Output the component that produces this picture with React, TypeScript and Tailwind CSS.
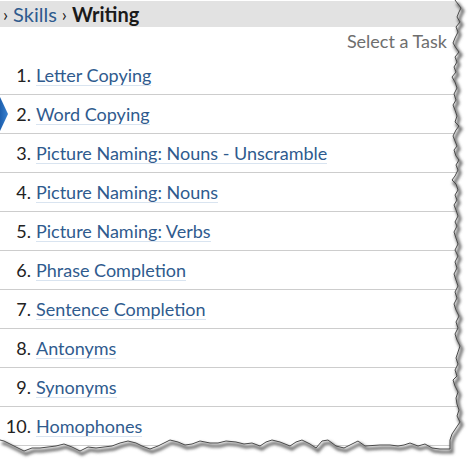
import React from "react";

const tasks = [
  "Letter Copying",
  "Word Copying",
  "Picture Naming: Nouns - Unscramble",
  "Picture Naming: Nouns",
  "Picture Naming: Verbs",
  "Phrase Completion",
  "Sentence Completion",
  "Antonyms",
  "Synonyms",
  "Homophones",
];

// torn paper edge, right side then bottom side
const rightEdge: [number, number][] = [
  [455, 0], [458, 4], [461, 8], [459, 12], [457, 17], [460, 22], [456, 27], [458, 32],
  [455, 38], [453, 43], [456, 48], [459, 52], [455, 57], [457, 62], [454, 67], [456, 72],
  [452, 77], [455, 82], [457, 88], [454, 94], [456, 100], [453, 105], [455, 110], [457, 116],
  [455, 122], [459, 126], [456, 130], [453, 136], [455, 141], [457, 146], [454, 150], [456, 156],
  [459, 160], [456, 165], [458, 170], [455, 176], [452, 180], [456, 184], [458, 190], [455, 195],
  [457, 200], [454, 205], [456, 210], [458, 216], [455, 222], [457, 226], [454, 232], [456, 238],
  [458, 244], [455, 250], [458, 256], [455, 262], [457, 268], [454, 274], [456, 280], [458, 286],
  [455, 292], [457, 298], [454, 304], [456, 310], [459, 316], [456, 322], [458, 328], [455, 334],
  [457, 340], [460, 346], [458, 352], [456, 358], [458, 364], [455, 370], [457, 376], [453, 380],
  [455, 386], [458, 392], [456, 398], [457, 404], [459, 410], [457, 416], [460, 422], [456, 428],
  [452, 434], [450, 440], [450, 449],
];
const bottomEdge: [number, number][] = [
  [440, 449], [432, 448], [425, 444], [418, 446], [410, 443], [404, 445], [398, 446], [390, 445],
  [380, 445], [365, 446], [358, 441], [352, 444], [344, 448], [336, 446], [328, 440], [322, 441],
  [316, 448], [310, 444], [302, 440], [296, 442], [290, 446], [280, 442], [272, 440], [266, 442],
  [260, 446], [252, 443], [244, 444], [236, 442], [226, 441], [218, 443], [210, 443], [200, 441],
  [192, 444], [185, 445], [178, 442], [170, 440], [164, 443], [158, 446], [150, 449], [142, 446],
  [136, 443], [128, 441], [120, 443], [112, 446], [104, 447], [96, 448], [88, 447], [80, 451],
  [72, 447], [64, 444], [56, 446], [48, 447], [40, 448], [32, 448], [24, 451], [16, 447],
  [10, 444], [4, 441], [0, 440],
];

const edge = [...rightEdge, ...bottomEdge].map((p) => p.join(",")).join(" ");

const TornEdge = () => (
  <svg className="absolute inset-0 pointer-events-none" width={474} height={462}>
    <defs>
      <filter id="tornShadow" x="-10%" y="-10%" width="130%" height="130%">
        <feGaussianBlur stdDeviation="1.4" />
      </filter>
    </defs>
    <polygon points={`474,0 ${edge} 0,462 474,462`} fill="#ffffff" />
    <polyline
      points={edge}
      fill="none"
      stroke="#6a6a6a"
      strokeWidth={3}
      transform="translate(2,3)"
      filter="url(#tornShadow)"
    />
    <polyline points={edge} fill="none" stroke="#4a4a4a" strokeWidth={1} />
  </svg>
);

const App = () => {
  return (
    <div
      className="relative w-[474px] h-[462px] bg-white overflow-hidden"
      style={{ fontFamily: "Lato, 'Liberation Sans', sans-serif" }}
    >
      <div className="w-[462px] pt-[1px]">
        <div className="h-[26px] bg-[#e2e2e2] flex items-center pl-[3px] text-[20px] leading-none">
          <span className="text-[#222] text-[18px]">›</span>
          <span className="ml-[5px] text-[#2f5b8e]">Skills</span>
          <span className="ml-[5px] text-[#222] text-[18px]">›</span>
          <span className="ml-[5px] font-bold text-[#1a1a1a]">Writing</span>
        </div>
        <div className="h-[29px] flex items-end justify-end pr-[15px] pb-[1px] text-[18px] text-[#6e6e6e]">
          Select a Task
        </div>
        <div className="flex flex-col">
          {tasks.map((task, i) => (
            <div
              key={task}
              className="relative h-[39px] border-b border-[#cdcdcd] flex items-center text-[18px]"
            >
              {i === 1 && (
                <svg className="absolute left-0 top-[2px]" width={10} height={34}>
                  <defs>
                    <linearGradient id="marker" x1="0" y1="0" x2="1" y2="0">
                      <stop offset="0" stopColor="#1d5fae" />
                      <stop offset="1" stopColor="#3a82d0" />
                    </linearGradient>
                  </defs>
                  <polygon points="0,0 8,17 0,34" fill="url(#marker)" />
                </svg>
              )}
              <span className="w-[31px] text-right text-[#222]">{i + 1}.</span>
              <span className="ml-[5px] text-[#2f5b8e] border-b border-[#d9e4f0] leading-[20px]">
                {task}
              </span>
            </div>
          ))}
        </div>
      </div>
      <TornEdge />
    </div>
  );
};

export default App;
